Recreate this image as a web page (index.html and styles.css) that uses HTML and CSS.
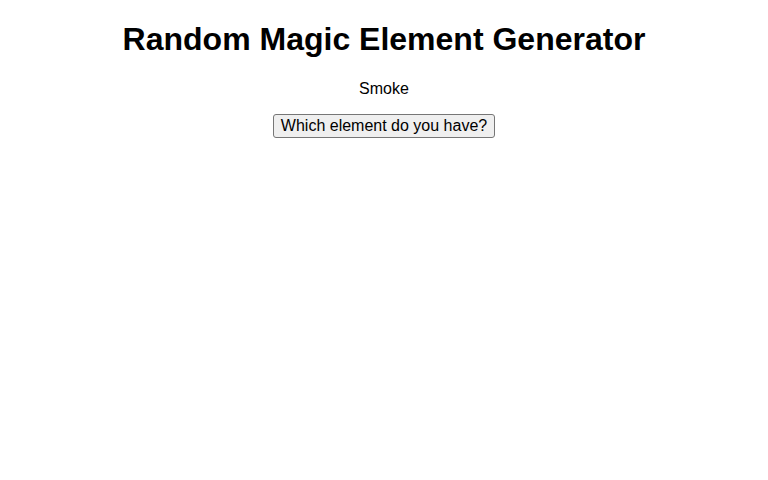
FILE: index.html
```html
<!DOCTYPE html>
<html lang="en">
<head>
<meta charset="utf-8">
<title>Random Magic Element Generator</title>
<link rel="stylesheet" href="styles.css">
</head>
<body>
<main class="generator">
  <h1 class="generator-title">Random Magic Element Generator</h1>
  <p class="generator-result">Smoke</p>
  <button class="generator-button" type="button">Which element do you have?</button>
</main>
</body>
</html>
```
FILE: styles.css
```css
body {
  margin: 8px;
  font-family: "Liberation Sans", Arial, sans-serif;
  background: #fff;
  color: #000;
}

.generator {
  text-align: center;
}

.generator-title {
  font-size: 32px;
  font-weight: bold;
  margin: 13.44px 0 21.44px;
}

.generator-result {
  font-size: 16px;
  margin: 16px 0;
}

.generator-button {
  font-family: "Liberation Sans", Arial, sans-serif;
  font-size: 16px;
  padding: 2px 7px;
  color: #000;
  background: #efefef;
  border: 1px solid #767676;
  border-radius: 3px;
}
```
